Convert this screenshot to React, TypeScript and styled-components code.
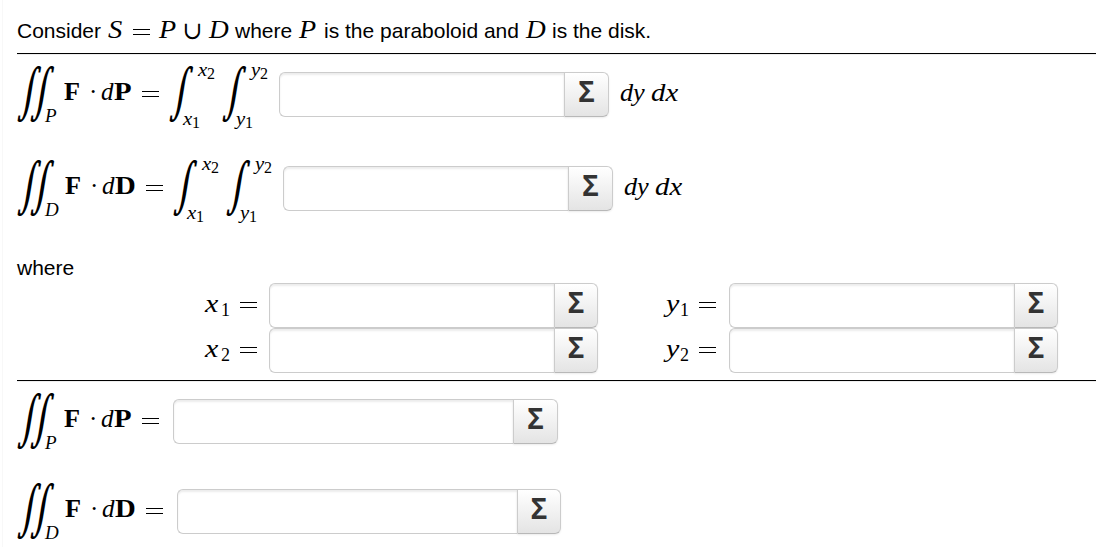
import React from 'react';
import styled, { createGlobalStyle } from 'styled-components';

const GlobalStyle = createGlobalStyle`
  * {
    box-sizing: border-box;
  }

  body {
    margin: 0;
    background: #fff;
    overflow: hidden;
  }
`;

const Page = styled.main`
  height: 547px;
  margin-left: 2px;
  padding-left: 14px;
  border-left: 1px solid #f8f8f8;
  overflow: hidden;
  color: #000;
  font-family: 'Liberation Sans', Arial, sans-serif;
  font-size: 21px;
`;

const Intro = styled.div`
  display: flex;
  align-items: flex-start;
  height: 53px;
`;

const Rule = styled.div`
  height: 2px;
  border-top: 1px solid #000;
  border-bottom: 1px solid #eee;
`;

const Where = styled.div`
  height: 62px;
  padding-top: 35px;
  line-height: 24px;
`;

const Equation = styled.div<{ $height: number }>`
  display: flex;
  align-items: flex-start;
  height: ${({ $height }) => $height}px;
`;

const Spacer = styled.div`
  height: 11px;
`;

const Words = styled.span<{ $w: number }>`
  flex: none;
  width: ${({ $w }) => $w}px;
  margin-top: 19px;
  line-height: 24px;
  white-space: nowrap;
`;

// $base is the distance from the top of the row to the baseline
const Glyph = styled.span<{
  $w: number;
  $base: number;
  $size?: number;
  $bold?: boolean;
  $roman?: boolean;
  $stretch?: number;
}>`
  flex: none;
  width: ${({ $w }) => $w}px;
  margin-top: ${({ $base, $size = 25 }) => Math.round($base - $size * 0.8375)}px;
  font-family: 'Liberation Serif', 'Times New Roman', serif;
  font-size: ${({ $size = 25 }) => $size}px;
  font-style: ${({ $bold, $roman }) => ($bold || $roman ? 'normal' : 'italic')};
  font-weight: ${({ $bold }) => ($bold ? 700 : 400)};
  line-height: 1;
  white-space: nowrap;
  transform: scaleX(${({ $stretch = 1 }) => $stretch});
  transform-origin: 0 0;
`;

const Union = styled(Glyph)`
  font-family: 'DejaVu Math TeX Gyre', serif;
`;

const Differentials = styled.span`
  display: flex;
  align-items: flex-start;
  margin-left: 11px;
`;

const EqualSign = styled.span<{ $w: number; $top: number }>`
  flex: none;
  width: ${({ $w }) => $w}px;
  margin-top: ${({ $top }) => $top}px;

  &::before {
    content: '';
    display: block;
    width: 17px;
    height: 4px;
    border: solid #000;
    border-width: 1px 0;
  }
`;

const IntegralSign = styled.span<{ $w: number }>`
  flex: none;
  width: ${({ $w }) => $w}px;
  height: 56px;
  font-family: 'DejaVu Math TeX Gyre', serif;
  font-size: 51px;
  font-style: italic;
  line-height: 56px;
  white-space: nowrap;
  transform: scaleX(0.66);
  transform-origin: 0 0;
`;

const Limits = styled.span<{ $w: number }>`
  flex: none;
  width: ${({ $w }) => $w}px;
  height: 62px;
`;

const Limit = styled.span<{ $indent: number }>`
  display: flex;
  align-items: flex-start;
  height: 48px;
  padding-left: ${({ $indent }) => $indent}px;
`;

const Field = styled.div<{ $w: number; $top?: number }>`
  display: flex;
  flex: none;
  width: ${({ $w }) => $w}px;
  height: 45px;
  margin-top: ${({ $top = 0 }) => $top}px;
`;

const Input = styled.input`
  flex: 1;
  min-width: 0;
  height: 45px;
  padding: 0 10px;
  border: 1px solid #ccc;
  border-right: 0;
  border-radius: 6px 0 0 6px;
  background: #fff;
  box-shadow: inset 0 2px 2px rgba(0, 0, 0, 0.075);
  font-size: 21px;
  outline: none;
`;

const SigmaButton = styled.button<{ $w: number }>`
  width: ${({ $w }) => $w}px;
  height: 45px;
  padding: 0 0 7px;
  border: 1px solid #ccc;
  border-bottom-color: #b8b8b8;
  border-radius: 0 6px 6px 0;
  background: linear-gradient(#fff, #e4e4e4);
  box-shadow: 0 1px 2px rgba(0, 0, 0, 0.08);
  color: #333;
  font: bold 28px/36px 'Open Sans', sans-serif;
`;

const Grid = styled.div`
  display: grid;
  grid-template-columns: 461px 1fr;
  grid-auto-rows: 45px;
  height: 97px;
  padding-left: 188px;
`;

const Cell = styled.div`
  display: flex;
  align-items: flex-start;
`;

function Answer({ width, top, button = 45 }: { width: number; top?: number; button?: number }) {
  return (
    <Field $w={width} $top={top}>
      <Input />
      <SigmaButton $w={button}>Σ</SigmaButton>
    </Field>
  );
}

function Flux({ surface }: { surface: 'P' | 'D' }) {
  const disk = surface === 'D';
  return (
    <>
      <IntegralSign $w={13}>∫</IntegralSign>
      <IntegralSign $w={15}>∫</IntegralSign>
      <Glyph $w={disk ? 20 : 19} $base={56} $size={19}>{surface}</Glyph>
      <Glyph $w={25} $base={34} $bold $stretch={1.05}>F</Glyph>
      <Glyph $w={12} $base={34} $roman>·</Glyph>
      <Glyph $w={13} $base={34}>d</Glyph>
      <Glyph $w={disk ? 31 : 28} $base={34} $bold $stretch={1.15}>{surface}</Glyph>
    </>
  );
}

function Integral({ name, width }: { name: 'x' | 'y'; width: number }) {
  return (
    <>
      <IntegralSign $w={14}>∫</IntegralSign>
      <Limits $w={width - 14}>
        <Limit $indent={15}>
          <Glyph $w={9} $base={10} $size={18} $stretch={1.15}>{name}</Glyph>
          <Glyph $w={9} $base={13} $size={16} $roman>2</Glyph>
        </Limit>
        <Limit $indent={0}>
          <Glyph $w={9} $base={11} $size={18} $stretch={1.15}>{name}</Glyph>
          <Glyph $w={9} $base={14} $size={16} $roman>1</Glyph>
        </Limit>
      </Limits>
    </>
  );
}

function IteratedRow({ surface, height }: { surface: 'P' | 'D'; height: number }) {
  return (
    <Equation $height={height}>
      <Flux surface={surface} />
      <EqualSign $w={27} $top={25} />
      <Integral name="x" width={53} />
      <Integral name="y" width={57} />
      <Answer width={330} top={6} />
      <Differentials>
        <Glyph $w={31} $base={35} $stretch={1.05}>dy</Glyph>
        <Glyph $w={30} $base={35} $stretch={1.15}>dx</Glyph>
      </Differentials>
    </Equation>
  );
}

function Bound({ name, index }: { name: 'x' | 'y'; index: number }) {
  return (
    <Cell>
      <Glyph $w={name === 'x' ? 16 : 14} $base={29} $stretch={1.2}>{name}</Glyph>
      <Glyph $w={19} $base={33} $size={18} $roman>{index}</Glyph>
      <EqualSign $w={name === 'x' ? 29 : 30} $top={19} />
      <Answer width={329} button={44} />
    </Cell>
  );
}

export default function App() {
  return (
    <>
      <GlobalStyle />
      <Page>
        <Intro>
          <Words $w={91}>Consider</Words>
          <Glyph $w={25} $base={39} $size={26} $stretch={1.1}>S</Glyph>
          <EqualSign $w={26} $top={29} />
          <Glyph $w={24} $base={39} $size={26} $stretch={1.08}>P</Glyph>
          <Union $w={26} $base={39} $size={24} $roman>∪</Union>
          <Glyph $w={26} $base={39} $size={26} $stretch={1.05}>D</Glyph>
          <Words $w={64}>where</Words>
          <Glyph $w={25} $base={39} $size={26} $stretch={1.08}>P</Glyph>
          <Words $w={202}>is the paraboloid and</Words>
          <Glyph $w={26} $base={39} $size={26} $stretch={1.05}>D</Glyph>
          <Words $w={100}>is the disk.</Words>
        </Intro>
        <Rule />
        <Spacer />
        <IteratedRow surface="P" height={94} />
        <IteratedRow surface="D" height={61} />
        <Where>where</Where>
        <Grid>
          <Bound name="x" index={1} />
          <Bound name="y" index={1} />
          <Bound name="x" index={2} />
          <Bound name="y" index={2} />
        </Grid>
        <Rule />
        <Spacer />
        <Equation $height={90}>
          <Flux surface="P" />
          <EqualSign $w={31} $top={25} />
          <Answer width={385} top={6} />
        </Equation>
        <Equation $height={64}>
          <Flux surface="D" />
          <EqualSign $w={31} $top={25} />
          <Answer width={384} top={6} button={44} />
        </Equation>
      </Page>
    </>
  );
}
